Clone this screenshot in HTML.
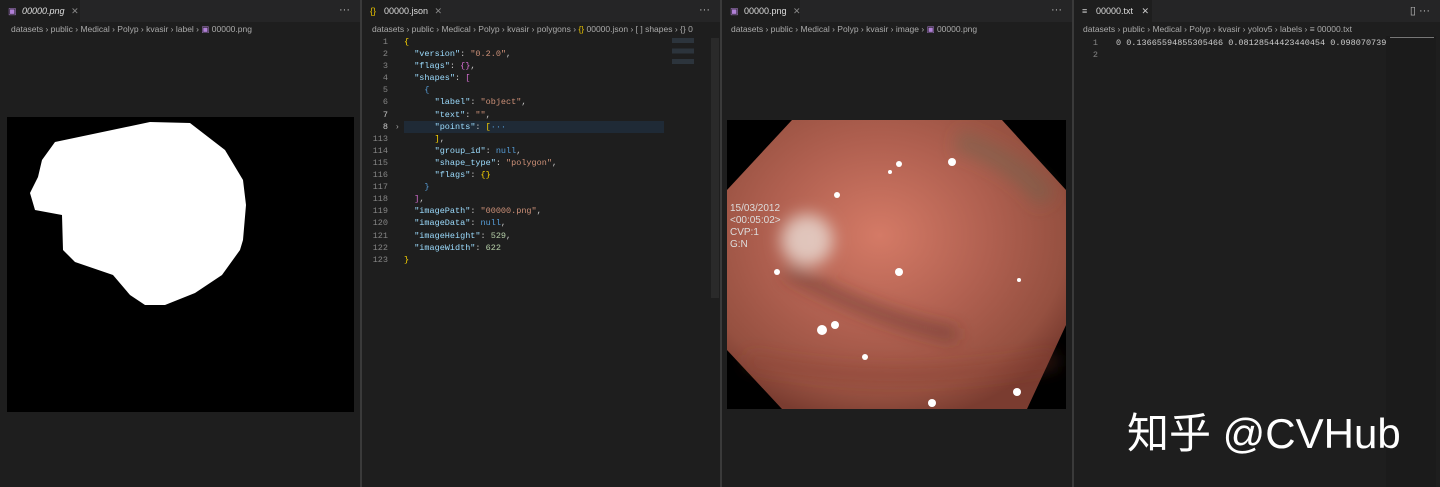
<!DOCTYPE html>
<html><head><meta charset="utf-8"><style>
*{margin:0;padding:0;box-sizing:border-box}
body{width:1440px;height:487px;background:#1e1e1e;position:relative;overflow:hidden;font-family:"Liberation Sans",sans-serif;color:#ccc}
.p{position:absolute;top:0;height:487px;background:#1e1e1e}
.tabbar{position:absolute;top:0;left:0;right:0;height:22px;background:#252526}
.tab{position:absolute;top:0;left:0;height:22px;background:#1e1e1e;font-size:9px;color:#ddd;padding:6px 0 0 22px;white-space:nowrap}
.tab i{position:absolute;left:8px;top:6px;font-style:normal;font-size:9px}
.dots{position:absolute;right:10px;top:4px;font-size:11px;color:#bbb}
.bc{position:absolute;top:24px;left:11px;font-size:8.5px;color:#aaa;white-space:nowrap}
.div{position:absolute;top:0;width:2px;height:487px;background:#3a3a3a}
.code{position:absolute;top:36px;left:0;font-family:"Liberation Mono",monospace;font-size:8.5px;line-height:12.1px;white-space:pre}
.ln{position:absolute;left:0;width:26px;text-align:right;color:#858585}
.k{color:#9cdcfe}.s{color:#ce9178}.n{color:#b5cea8}.b{color:#569cd6}.y{color:#ffd700}.m{color:#da70d6}
</style></head><body>
<div class="p" style="left:0;width:360px">
 <div class="tabbar"><div class="tab" style="width:80px"><i style="color:#b180d7">▣</i><em>00000.png</em> <span style="color:#888;margin-left:4px">✕</span></div><div class="dots">···</div></div>
 <div class="bc">datasets › public › Medical › Polyp › kvasir › label › <span style="color:#b180d7">▣</span> 00000.png</div>
 <svg style="position:absolute;left:7px;top:117px" width="347" height="295"><rect width="347" height="295" fill="#000"/>
 <polygon fill="#fff" points="48,25 143,5 183,6 218,33 236,63 239,88 236,123 233,133 215,158 188,176 158,188 138,188 123,178 106,158 68,145 56,133 55,98 28,93 23,76 31,60 35,43"/></svg>
</div>
<div class="div" style="left:360px"></div>
<div class="p" style="left:362px;width:358px">
 <div class="tabbar"><div class="tab" style="width:78px"><i style="color:#e8c200">{}</i>00000.json <span style="color:#888;margin-left:4px">✕</span></div><div class="dots">···</div></div>
 <div class="bc" style="left:10px">datasets › public › Medical › Polyp › kvasir › polygons › <span style="color:#e8c200">{}</span> 00000.json › [ ] shapes › {} 0</div>
 <div style="position:absolute;left:42px;top:121px;width:260px;height:12px;background:#1f2a36"></div>
 <div class="code"><div class="ln">1
2
3
4
5
6
<span style="color:#ccc">7</span>
<span style="color:#ccc">8</span>
113
114
115
116
117
118
119
120
121
122
123</div><div style="position:absolute;left:42px;top:0"><span class="y">{</span>
  <span class="k">"version"</span>: <span class="s">"0.2.0"</span>,
  <span class="k">"flags"</span>: <span class="m">{}</span>,
  <span class="k">"shapes"</span>: <span class="m">[</span>
    <span class="b">{</span>
      <span class="k">"label"</span>: <span class="s">"object"</span>,
      <span class="k">"text"</span>: <span class="s">""</span>,
      <span class="k">"points"</span>: <span class="y">[</span><span class="b">···</span>
      <span class="y">]</span>,
      <span class="k">"group_id"</span>: <span class="b">null</span>,
      <span class="k">"shape_type"</span>: <span class="s">"polygon"</span>,
      <span class="k">"flags"</span>: <span class="y">{}</span>
    <span class="b">}</span>
  <span class="m">]</span>,
  <span class="k">"imagePath"</span>: <span class="s">"00000.png"</span>,
  <span class="k">"imageData"</span>: <span class="b">null</span>,
  <span class="k">"imageHeight"</span>: <span class="n">529</span>,
  <span class="k">"imageWidth"</span>: <span class="n">622</span>
<span class="y">}</span></div></div>
 <div style="position:absolute;left:34px;top:122px;font-size:8px;color:#aaa">›</div>
 <div style="position:absolute;left:310px;top:38px;width:22px;height:26px;background:linear-gradient(#3a4a5a 0 20%,transparent 20% 40%,#3a4a5a 40% 60%,transparent 60% 80%,#3a4a5a 80%);opacity:.5"></div>
 <div style="position:absolute;left:349px;top:38px;width:8px;height:260px;background:#2a2a2a"></div>
</div>
<div class="div" style="left:720px"></div>
<div class="p" style="left:722px;width:350px">
 <div class="tabbar"><div class="tab" style="width:78px"><i style="color:#b180d7">▣</i>00000.png <span style="color:#888;margin-left:4px">✕</span></div><div class="dots">···</div></div>
 <div class="bc" style="left:9px">datasets › public › Medical › Polyp › kvasir › image › <span style="color:#b180d7">▣</span> 00000.png</div>
 <svg style="position:absolute;left:5px;top:120px" width="339" height="289">
 <defs><radialGradient id="g" cx="45%" cy="40%" r="65%"><stop offset="0" stop-color="#d47a66"/><stop offset=".5" stop-color="#b06050"/><stop offset=".85" stop-color="#955040"/><stop offset="1" stop-color="#7a3c30"/></radialGradient>
 <filter id="bl"><feGaussianBlur stdDeviation="8"/></filter></defs>
 <rect width="339" height="289" fill="#000"/>
 <polygon fill="url(#g)" points="65,0 275,0 339,70 339,205 300,289 55,289 0,230 0,70"/>
 <g filter="url(#bl)">
 <ellipse cx="80" cy="120" rx="26" ry="26" fill="#eadcd4" opacity=".8"/>
 <path d="M60,150 Q150,200 230,215" stroke="#5a3028" stroke-width="14" fill="none" opacity=".5"/>
 <path d="M230,20 Q290,40 320,80" stroke="#6a6a50" stroke-width="22" fill="none" opacity=".4"/>
 <path d="M20,240 Q170,270 330,240" stroke="#8a4030" stroke-width="14" fill="none" opacity=".4"/>
 </g>
 <g fill="#fff"><circle cx="225" cy="42" r="4"/><circle cx="172" cy="44" r="3"/><circle cx="163" cy="52" r="2"/><circle cx="172" cy="152" r="4"/><circle cx="95" cy="210" r="5"/><circle cx="108" cy="205" r="4"/><circle cx="138" cy="237" r="3"/><circle cx="205" cy="283" r="4"/><circle cx="290" cy="272" r="4"/><circle cx="110" cy="75" r="3"/><circle cx="292" cy="160" r="2"/><circle cx="50" cy="152" r="3"/></g>
 <g font-family="Liberation Sans,sans-serif" font-size="10" fill="#ddd"><text x="3" y="91">15/03/2012</text><text x="3" y="103">&lt;00:05:02&gt;</text><text x="3" y="115">CVP:1</text><text x="3" y="127">G:N</text></g>
 </svg>
</div>
<div class="div" style="left:1072px"></div>
<div class="p" style="left:1074px;width:366px">
 <div class="tabbar"><div class="tab" style="width:78px"><i style="color:#ccc">≡</i>00000.txt <span style="color:#ccc;margin-left:6px">✕</span></div><div class="dots">▯ ···</div></div>
 <div class="bc" style="left:9px">datasets › public › Medical › Polyp › kvasir › yolov5 › labels › ≡ 00000.txt</div>
 <div class="code" style="top:37px;line-height:12px"><div class="ln" style="width:24px">1
2</div><div style="position:absolute;left:42px;top:0;color:#ccc;width:270px;overflow:hidden">0 0.13665594855305466 0.08128544423440454 0.09807073954</div></div>
 <div style="position:absolute;left:312px;top:36px;width:50px;height:451px;background:#1b1b1b"></div>
 <div style="position:absolute;left:316px;top:37px;width:44px;height:1px;background:#777"></div>
 <div style="position:absolute;left:53px;top:400px;font-family:'Liberation Sans','Noto Sans CJK SC',sans-serif;font-size:42px;color:#fff;white-space:nowrap">知乎 @CVHub</div>
</div>
</body></html>
